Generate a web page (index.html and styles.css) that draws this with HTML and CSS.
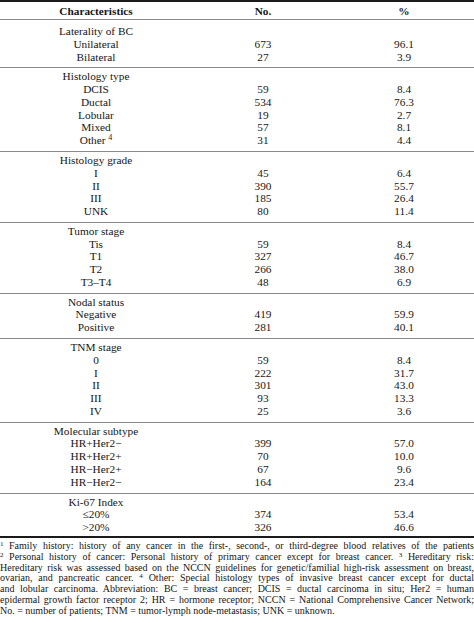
FILE: index.html
```html
<!DOCTYPE html>
<html lang="en">
<head>
<meta charset="utf-8">
<title>Characteristics table</title>
<link rel="stylesheet" href="styles.css">
</head>
<body>
<div class="page">
<table class="tbl">
  <colgroup><col class="c1"><col class="c2"><col class="c3"></colgroup>
  <thead>
    <tr><th>Characteristics</th><th>No.</th><th>%</th></tr>
  </thead>
  <tbody>
    <tr><td>Laterality of BC</td><td></td><td></td></tr>
    <tr><td>Unilateral</td><td>673</td><td>96.1</td></tr>
    <tr><td>Bilateral</td><td>27</td><td>3.9</td></tr>
  </tbody>
  <tbody>
    <tr><td>Histology type</td><td></td><td></td></tr>
    <tr><td>DCIS</td><td>59</td><td>8.4</td></tr>
    <tr><td>Ductal</td><td>534</td><td>76.3</td></tr>
    <tr><td>Lobular</td><td>19</td><td>2.7</td></tr>
    <tr><td>Mixed</td><td>57</td><td>8.1</td></tr>
    <tr><td>Other <sup class="s">4</sup></td><td>31</td><td>4.4</td></tr>
  </tbody>
  <tbody>
    <tr><td>Histology grade</td><td></td><td></td></tr>
    <tr><td>I</td><td>45</td><td>6.4</td></tr>
    <tr><td>II</td><td>390</td><td>55.7</td></tr>
    <tr><td>III</td><td>185</td><td>26.4</td></tr>
    <tr><td>UNK</td><td>80</td><td>11.4</td></tr>
  </tbody>
  <tbody>
    <tr><td>Tumor stage</td><td></td><td></td></tr>
    <tr><td>Tis</td><td>59</td><td>8.4</td></tr>
    <tr><td>T1</td><td>327</td><td>46.7</td></tr>
    <tr><td>T2</td><td>266</td><td>38.0</td></tr>
    <tr><td>T3–T4</td><td>48</td><td>6.9</td></tr>
  </tbody>
  <tbody>
    <tr><td>Nodal status</td><td></td><td></td></tr>
    <tr><td>Negative</td><td>419</td><td>59.9</td></tr>
    <tr><td>Positive</td><td>281</td><td>40.1</td></tr>
  </tbody>
  <tbody>
    <tr><td>TNM stage</td><td></td><td></td></tr>
    <tr><td>0</td><td>59</td><td>8.4</td></tr>
    <tr><td>I</td><td>222</td><td>31.7</td></tr>
    <tr><td>II</td><td>301</td><td>43.0</td></tr>
    <tr><td>III</td><td>93</td><td>13.3</td></tr>
    <tr><td>IV</td><td>25</td><td>3.6</td></tr>
  </tbody>
  <tbody>
    <tr><td>Molecular subtype</td><td></td><td></td></tr>
    <tr><td>HR+Her2−</td><td>399</td><td>57.0</td></tr>
    <tr><td>HR+Her2+</td><td>70</td><td>10.0</td></tr>
    <tr><td>HR−Her2+</td><td>67</td><td>9.6</td></tr>
    <tr><td>HR−Her2−</td><td>164</td><td>23.4</td></tr>
  </tbody>
  <tbody>
    <tr><td>Ki-67 Index</td><td></td><td></td></tr>
    <tr><td>≤20%</td><td>374</td><td>53.4</td></tr>
    <tr><td>&gt;20%</td><td>326</td><td>46.6</td></tr>
  </tbody>
</table>
<div class="notes">
  <div class="ln"><sup class="fn">1</sup> Family history: history of any cancer in the first-, second-, or third-degree blood relatives of the patients</div>
  <div class="ln"><sup class="fn">2</sup> Personal history of cancer: Personal history of primary cancer except for breast cancer. <sup class="fn">3</sup> Hereditary risk:</div>
  <div class="ln">Hereditary risk was assessed based on the NCCN guidelines for genetic/familial high-risk assessment on breast,</div>
  <div class="ln">ovarian, and pancreatic cancer. <sup class="fn">4</sup> Other: Special histology types of invasive breast cancer except for ductal</div>
  <div class="ln">and lobular carcinoma. Abbreviation: BC = breast cancer; DCIS = ductal carcinoma in situ; Her2 = human</div>
  <div class="ln">epidermal growth factor receptor 2; HR = hormone receptor; NCCN = National Comprehensive Cancer Network;</div>
  <div class="ln last">No. = number of patients; TNM = tumor-lymph node-metastasis; UNK = unknown.</div>
</div>
</div>
</body>
</html>
```

FILE: styles.css
```css
html, body {
  margin: 0;
  padding: 0;
  background: #ffffff;
}
.page {
  width: 474px;
  font-family: "Liberation Serif", "Times New Roman", serif;
  color: #161616;
}
.tbl {
  width: 474px;
  border-collapse: collapse;
  table-layout: fixed;
  font-size: 11.3px;
}
.c1 { width: 192px; }
.c2 { width: 142px; }
.c3 { width: 140px; }
.tbl th, .tbl td {
  padding: 0;
  text-align: center;
  line-height: 12.85px;
  font-weight: normal;
  white-space: nowrap;
}
.tbl thead tr {
  border-top: 2px solid #1a1a1a;
  border-bottom: 1px solid #8a8a8a;
}
.tbl th {
  font-weight: bold;
  padding-top: 2.5px;
  padding-bottom: 2px;
}
.tbl tbody + tbody {
  border-top: 1.3px solid #8a8a8a;
}
.tbl tbody tr:first-child td { padding-top: 2px; }
.tbl tbody:first-of-type tr:first-child td { padding-top: 4.5px; }
.tbl tbody tr:last-child td { padding-bottom: 3.7px; }
.tbl tbody:last-of-type tr:last-child td { padding-bottom: 1.5px; }
.tbl tbody:last-of-type { border-bottom: 2px solid #1a1a1a; }
.s {
  font-size: 8px;
  line-height: 0;
  vertical-align: 4px;
}
.notes {
  margin-top: 3.5px;
  font-size: 10px;
  line-height: 10.8px;
}
.ln {
  white-space: nowrap;
  text-align: justify;
  text-align-last: justify;
}
.ln.last {
  text-align: left;
  text-align-last: left;
}
.fn {
  font-size: 7px;
  line-height: 0;
  vertical-align: 3.5px;
}
```
